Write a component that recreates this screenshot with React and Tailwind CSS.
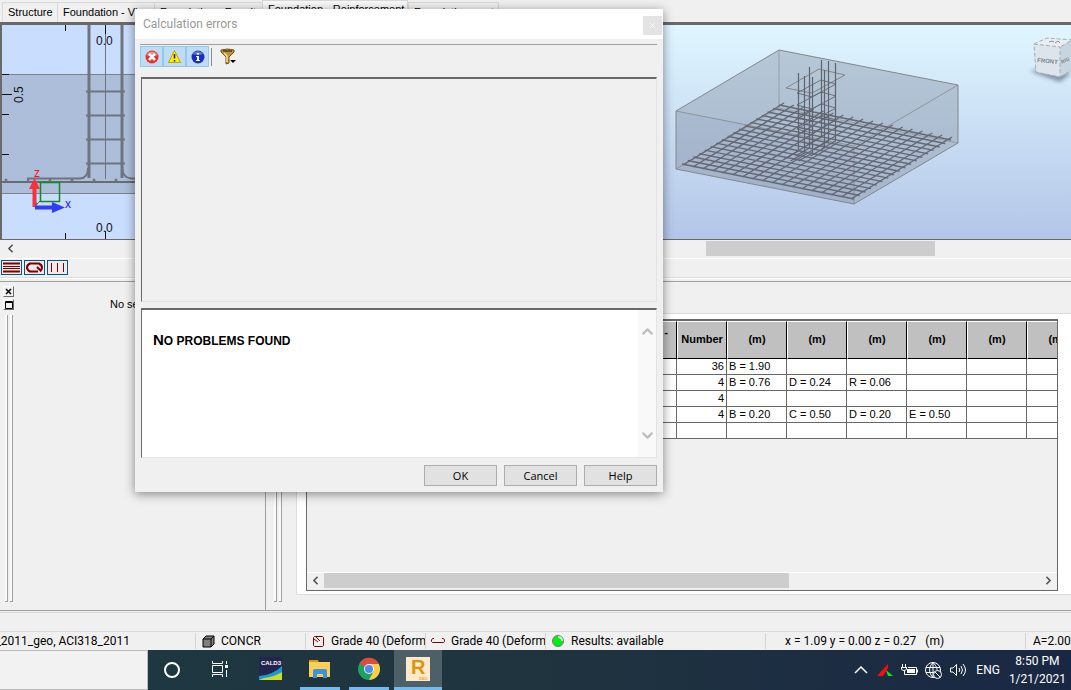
import React from 'react';
import { ChevronDown, ChevronLeft, ChevronRight, ChevronUp } from 'lucide-react';

const TABS = [
  { label: 'Structure', width: 'w-[55px]' },
  { label: 'Foundation - Views', width: 'w-[97px]' },
  { label: 'Foundation - Results', width: 'w-[108px]' },
  { label: 'Foundation - Reinforcement', width: 'w-[146px]', active: true },
  { label: 'Foundation - notes', width: 'w-[91px]' },
];

const ROWS = [
  ['36', 'B = 1.90', '', '', '', '', ''],
  ['4', 'B = 0.76', 'D = 0.24', 'R = 0.06', '', '', ''],
  ['4', '', '', '', '', '', ''],
  ['4', 'B = 0.20', 'C = 0.50', 'D = 0.20', 'E = 0.50', '', ''],
  ['', '', '', '', '', '', ''],
];

// Reinforcement mesh corners
const BACK = [121, 82];
const RIGHT = [289, 116];
const LEFT = [24, 141];
const BARS = Array.from({ length: 18 }, (_, i) => i / 17);

const STARTER_BARS = [
  [138, 50, 128],
  [144, 53, 130],
  [149, 44, 125],
  [152, 54, 130],
  [161, 37, 114],
  [164, 47, 125],
  [168, 38, 118],
  [175, 40, 118],
];

function TabStrip() {
  return (
    <nav className="flex h-[22px] items-end pl-[2px]">
      {TABS.map((tab) => (
        <button
          key={tab.label}
          className={`shrink-0 overflow-hidden border-t border-l border-[#d9d9d9] pl-[5px] text-left text-[11px] whitespace-nowrap ${tab.width} ${
            tab.active ? 'h-[22px] border-r bg-[#f9f9f9] pb-[4px]' : 'h-[20px] last:border-r'
          }`}
        >
          {tab.label}
        </button>
      ))}
    </nav>
  );
}

function ElevationView() {
  return (
    <div className="w-[400px] shrink-0 overflow-hidden border-r border-[#696969] bg-[#c9ddff]">
      <svg width="400" height="215" viewBox="2 25 400 215" fontFamily="Liberation Sans, sans-serif">
        <rect x="2" y="74" width="400" height="120" fill="#adbedb" />
        <path d="M2 74.5H402M2 193.5H402" stroke="#7c828c" />
        <path d="M2 182H402" stroke="#686c74" strokeWidth="2" />
        <g stroke="#6f747e" fill="none">
          <path d="M105.5 25V179" strokeWidth="1" />
          <path d="M89 25V178M122 25V178" strokeWidth="3" />
          <path d="M86 91.500H125M86 115.500H125M86 139.500H125M86 163.500H125" strokeWidth="2" />
          <path d="M28 181V178.500H80Q88 178 88 168M122 168Q123 178 131 178.500H180" strokeWidth="2" />
        </g>
        <g fill="#6f747e">
          {[6, 50, 72, 94, 116].map((x) => (
            <circle key={x} cx={x} cy="180" r="1.500" />
          ))}
        </g>
        <path
          d="M65.500 25V31M65.500 233V240M105.500 25V34M105.500 231V240M2 74.500H9M2 94.500H12M2 114.500H9M2 154.500H9"
          stroke="#111"
        />
        <g fontSize="12" fill="#111">
          <text x="96" y="45">0.0</text>
          <text x="96" y="232">0.0</text>
          <text x="0" y="0" transform="translate(23 103) rotate(-90)">0.5</text>
        </g>
        <rect x="40.500" y="182.500" width="19" height="19" fill="none" stroke="#118a22" strokeWidth="1.500" />
        <path d="M34 200L37 204L41 200M37 204L35 208" stroke="#118a22" fill="none" />
        <path d="M32.500 207V189H29L34.500 178L40 189H36.500V207Z" fill="#f8323c" />
        <path d="M35 205.500H52V202L65 207.500L52 213V209.500H35Z" fill="#2f3cff" />
        <text x="34" y="177" fontSize="12" fill="#f01020">z</text>
        <text x="65" y="208" fontSize="12" fill="#2020f0">x</text>
      </svg>
    </div>
  );
}

function FootingModel() {
  const dx = [RIGHT[0] - BACK[0], RIGHT[1] - BACK[1]];
  const dy = [LEFT[0] - BACK[0], LEFT[1] - BACK[1]];

  return (
    <svg width="310" height="215" viewBox="0 2 310 215" className="shrink-0" fill="none">
      <path d="M16 88L119 27L298 62V120L194 181L16 146Z" fill="#8f9bad" fillOpacity=".48" />
      <path d="M16 88L194 123V181L16 146Z" fill="#8b98b8" fillOpacity=".14" />
      <g stroke="#858687">
        <path d="M16 88L119 27L298 62V120L194 181L16 146Z" />
        <path d="M119 27V85L16 146M119 85L298 120" strokeOpacity=".6" />
        <path d="M16 88L194 123L298 62M194 123V181" strokeOpacity=".75" />
      </g>
      <g stroke="#646873" strokeWidth="1.400">
        {BARS.map((t) => (
          <path
            key={`a${t}`}
            d={`M${BACK[0] + dx[0] * t + 3} ${BACK[1] + dx[1] * t - 2}l${dy[0] - 4} ${dy[1] + 3}`}
          />
        ))}
        {BARS.map((t) => (
          <path
            key={`b${t}`}
            d={`M${BACK[0] + dy[0] * t - 2} ${BACK[1] + dy[1] * t}l${dx[0] + 4} ${dx[1] + 1}`}
          />
        ))}
      </g>
      <path d="M126 65L159 46L185 52L152 70Z" stroke="#858687" />
      <g stroke="#5f636d">
        {STARTER_BARS.map(([x, top, bottom]) => (
          <path key={x} d={`M${x + 0.5} ${top}V${bottom}l-14 8`} strokeWidth="1.200" />
        ))}
        {[0, 12, 24, 36].map((y) => (
          <path key={y} d={`M137 ${70 + y}L161 ${57 + y}L176 ${61 + y}L152 ${74 + y}Z`} strokeOpacity=".85" />
        ))}
      </g>
    </svg>
  );
}

function ViewCube() {
  return (
    <svg width="45" height="60" viewBox="0 0 45 60" className="shrink-0" fontFamily="Liberation Sans, sans-serif">
      <defs>
        <filter id="cubeShadow" x="-30%" y="-30%" width="160%" height="160%">
          <feGaussianBlur stdDeviation="2" />
        </filter>
      </defs>
      <path d="M4 46L22 42L45 48L34 57Z" fill="#7f93a5" filter="url(#cubeShadow)" />
      <path d="M8 19L34 22V52L10 47Z" fill="#dce5ec" />
      <path d="M8 19L21 13L46 15L34 22Z" fill="#e8eef2" />
      <path d="M34 22L46 15V45L34 52Z" fill="#c8d4de" />
      <path
        d="M8 19L34 22V52L10 47ZM8 19L21 13L46 15L34 22M34 52L46 45"
        fill="none"
        stroke="#a7adb2"
        strokeDasharray="4 2"
      />
      <path d="M23 17l3-1 2 1M29 18l3-2 2 2" fill="none" stroke="#8e959b" />
      <text fontSize="6" fontWeight="bold" fill="#7d858c" transform="translate(11 37) rotate(6)">
        FRONT
      </text>
      <text fontSize="5" fontWeight="bold" fill="#7d858c" transform="translate(36 39) rotate(-28)">
        RIG
      </text>
    </svg>
  );
}

function DisplayToolbar() {
  const box = 'flex h-[15px] w-[21px] items-center justify-center border border-[#005499] bg-[#f4e9e9]';
  return (
    <div className="flex h-[20px] items-start gap-[2px] border-t border-b border-t-white border-b-[#dcdcdc] pt-px pl-px">
      <button className={box} aria-label="Straight bars">
        <svg width="17" height="11" stroke="#7c0000">
          <path d="M0 1.500H17M0 9.500H17" strokeWidth="2" />
          <path d="M0 4.500H17M0 6.500H17" />
        </svg>
      </button>
      <button className={box} aria-label="Stirrups">
        <svg width="17" height="11" fill="none" stroke="#7c0000" strokeWidth="2">
          <path d="M14 8L11 5M12 9.500H4Q1 8 1 5.500Q1 3 4 1.500H13Q16 3 16 5.500Q16 8 14 9.500" />
        </svg>
      </button>
      <button className={box} aria-label="Longitudinal bars">
        <svg width="17" height="11" stroke="#7c0000">
          <path d="M2.500 1V10M8.500 1V10M14.500 1V10" />
        </svg>
      </button>
    </div>
  );
}

function BarTable() {
  const th =
    'border border-t-white border-l-white border-r-black border-b-black bg-[#c0c0c0] p-0 pb-[2px] text-[11px] font-bold';
  return (
    <table className="w-[780px] table-fixed border-separate border-spacing-0">
      <colgroup>
        <col className="w-[370px]" />
        <col className="w-[50px]" />
        <col span={6} className="w-[60px]" />
      </colgroup>
      <thead>
        <tr className="h-[38px]">
          <th className={`${th} pr-[8px]`}>
            <div className="h-[30px] text-right">-</div>
          </th>
          <th className={th}>Number</th>
          {[0, 1, 2, 3, 4, 5].map((i) => (
            <th key={i} className={th}>(m)</th>
          ))}
        </tr>
      </thead>
      <tbody>
        {ROWS.map((row, i) => (
          <tr key={i} className="h-[16px]">
            <td className="border-r border-b border-[#696969] bg-white p-0" />
            {row.map((value, j) => (
              <td
                key={j}
                className={`h-[16px] border-r border-b border-[#696969] bg-white px-[2px] py-0 text-[11px] leading-[15px] ${
                  j === 0 ? 'text-right' : ''
                }`}
              >
                {value}
              </td>
            ))}
          </tr>
        ))}
      </tbody>
    </table>
  );
}

function DockGrip() {
  return (
    <div className="flex gap-[2px]">
      <div className="w-[3px] border-r border-b border-[#a0a0a0] bg-[#fafafa]" />
      <div className="w-[3px] border-r border-b border-[#a0a0a0] bg-[#fafafa]" />
    </div>
  );
}

function LowerPane() {
  const dockButton =
    'flex h-[11px] w-[11px] items-center justify-center border border-white border-r-[#696969] border-b-[#696969]';
  return (
    <div className="flex min-h-[330px] flex-1 border-t border-b border-[#a0a0a0]">
      <aside className="flex w-[266px] shrink-0 border-r border-[#a0a0a0] pl-[3px]">
        <div className="flex w-[107px] flex-col gap-[2px] pt-[4px] pb-[8px]">
          <button className={dockButton} aria-label="Close pane">
            <svg width="7" height="7" stroke="#000" strokeWidth="1.500">
              <path d="M1 1L6 6M6 1L1 6" />
            </svg>
          </button>
          <button className={dockButton} aria-label="Maximize pane">
            <svg width="8" height="8" fill="none" stroke="#000">
              <path d="M.5 .5H7.500V7.500H.5ZM0 1.500H8" />
            </svg>
          </button>
          <div className="flex flex-1 pt-[3px] pl-[2px]">
            <DockGrip />
          </div>
        </div>
        <p className="pt-[14px] text-[11px]">No selection</p>
      </aside>
      <div className="flex pt-[33px] pb-[8px] pl-[8px]">
        <DockGrip />
      </div>
      <div className="flex min-w-0 flex-1 pt-[31px] pb-[15px] pl-[14px]">
        <div className="flex min-w-0 flex-1 border border-r-0 border-[#dcdcdc] bg-white pt-[5px] pr-[13px] pb-[3px] pl-[9px]">
          <div className="flex min-w-0 flex-1 flex-col overflow-hidden border border-t-2 border-[#696969] bg-[#f0f0f0]">
            <div className="flex-1">
              <BarTable />
            </div>
            <div className="flex h-[18px] items-start border-t border-white">
              <ChevronLeft className="mt-px ml-[2px] size-[13px] text-[#505050]" strokeWidth={3} />
              <div className="flex flex-1 px-[2px]">
                <div className="h-[15px] w-[65%] bg-[#cdcdcd]" />
              </div>
              <ChevronRight className="mt-px mr-[2px] size-[13px] text-[#505050]" strokeWidth={3} />
            </div>
          </div>
        </div>
      </div>
    </div>
  );
}

function StatusBar() {
  const cell = 'flex h-[16px] shrink-0 items-center overflow-hidden border-r border-[#d5d5d5]';
  return (
    <footer className="mt-[1px] flex h-[38px] items-end overflow-hidden border-t border-[#d9d9d9] font-[Roboto,sans-serif] text-[12px] whitespace-pre">
      <div className="flex h-[19px] w-full items-center border-t border-[#d9d9d9]">
        <div className={`${cell} w-[196px]`}>
          <span className="flex w-[130px] justify-end">8_2011_geo, ACI318_2011</span>
        </div>
        <div className={`${cell} w-[110px] gap-[6px] pl-[6px]`}>
          <svg width="13" height="13" stroke="#000" fill="#808080">
            <path d="M1 4L4 1H12V9L9 12H1ZM1 4H9V12M9 4L12 1" />
          </svg>
          CONCR
        </div>
        <div className={`${cell} w-[120px] gap-[7px] pl-[7px]`}>
          <svg width="11" height="11" className="shrink-0" fill="none" stroke="#7c0000">
            <path d="M1.500 .5H9.500L10.500 1.500V9.500L9.500 10.500H1.500L.5 9.500V1.500ZM3 1L7 5M1 3L5 6" />
          </svg>
          Grade 40 (Deform
        </div>
        <div className={`${cell} w-[120px] gap-[6px] pl-[5px]`}>
          <svg width="14" height="6" className="shrink-0" fill="none" stroke="#7c0000">
            <path d="M3 .5H1.500L.5 2V3.500L1.500 4.500H12.500L13.500 3.500V2L12.500 .5H11" />
          </svg>
          Grade 40 (Deform
        </div>
        <div className={`${cell} w-[220px] gap-[7px] pl-[6px]`}>
          <svg width="12" height="12">
            <circle cx="6" cy="6" r="5.500" fill="#00ef10" stroke="#777" />
            <path d="M6 2Q10 2 10 6" stroke="#b9ffc0" strokeWidth="2" fill="none" />
          </svg>
          Results: available
        </div>
        <div className={`${cell} w-[260px] pl-[19px]`}>x = 1.09 y = 0.00 z = 0.27   (m)</div>
        <div className="pl-[7px]">A=2.00</div>
      </div>
    </footer>
  );
}

function Taskbar() {
  const app = 'flex h-[40px] items-center justify-center border-b-[3px]';
  return (
    <div className="flex h-[40px] shrink-0 bg-linear-to-r from-[#1e3841] via-[#1f343f] to-[#1a2744] font-[Roboto,sans-serif] text-[12px] text-white">
      <input
        type="text"
        aria-label="Search"
        className="w-[148px] border border-l-0 border-[#bcbcbc] bg-[#f2f2f2] outline-none"
      />
      <button className={`${app} w-[48px] border-transparent`} aria-label="Cortana">
        <svg width="18" height="18" fill="none" stroke="#fff" strokeWidth="2">
          <circle cx="9" cy="10" r="7" />
        </svg>
      </button>
      <button className={`${app} w-[48px] border-transparent`} aria-label="Task view">
        <svg width="18" height="17" fill="none" stroke="#fff">
          <path d="M1.500 1V3.500H11.500V1M1.500 5.500H11.500V12.500H1.500ZM1.500 17V14.500H11.500V17M15.500 1V4M15.500 10V17" />
          <path d="M14 5H17V8H14Z" fill="#fff" stroke="none" />
        </svg>
      </button>
      <button className={`${app} w-[52px] border-transparent`} aria-label="CALD3">
        <svg width="23" height="23" viewBox="0 0 23 23" fontFamily="Liberation Sans, sans-serif">
          <rect width="23" height="23" fill="#24254f" />
          <path d="M0 19Q14 18 23 9V23H0Z" fill="#1799d6" />
          <path d="M5 21Q15 20 23 15V23H0Z" fill="#cadc2c" />
          <text x="2" y="8" fontSize="6" fontWeight="bold" fill="#fff">CALD3</text>
        </svg>
      </button>
      <button className={`${app} ml-[4px] w-[40px] border-[#76b9ed]`} aria-label="File Explorer">
        <svg width="22" height="20" viewBox="0 0 22 20">
          <path d="M0 1H9L10 4H0Z" fill="#d99b0c" />
          <path d="M0 3H21V18H0Z" fill="#fbce57" />
          <path d="M4 19V12Q4 10 6 10H16Q18 10 18 12V19H14V15H8V19Z" fill="#3c94dc" />
        </svg>
      </button>
      <button className={`${app} ml-[9px] w-[40px] border-[#76b9ed]`} aria-label="Chrome">
        <svg width="24" height="24" viewBox="0 0 24 24">
          <circle cx="12" cy="12" r="11" fill="#1da15f" />
          <path d="M12 12L2.500 6.500A11 11 0 0 1 22 7H12Z" fill="#db4c3f" />
          <path d="M12 7H21.800A11 11 0 0 1 12 23L16.500 14.500Z" fill="#ffce44" />
          <circle cx="12" cy="12" r="5" fill="#f1f1f1" />
          <circle cx="12" cy="12" r="4" fill="#4a8af4" />
        </svg>
      </button>
      <button className={`${app} ml-[5px] w-[48px] border-[#76b9ed] bg-[#4d5f67]`} aria-label="Robot">
        <svg width="24" height="24" viewBox="0 0 24 24" fontFamily="Liberation Sans, sans-serif">
          <rect width="24" height="24" fill="#fde9cc" />
          <text x="5" y="17" fontSize="20" fontWeight="bold" fill="#d9960f">R</text>
          <text x="13" y="23" fontSize="4" fontWeight="bold" fill="#eba43a">DEU</text>
        </svg>
      </button>

      <div className="ml-auto flex items-center pr-[5px]">
        <svg width="14" height="8" fill="none" stroke="#fff" strokeWidth="1.500">
          <path d="M1 7L7 1L13 7" />
        </svg>
        <svg width="16" height="12" className="ml-[9px]">
          <path d="M0 12L11 0V4L6 12Z" fill="#ff0a0a" />
          <path d="M9 6L16 12H11Z" fill="#0ce81c" />
        </svg>
        <svg width="17" height="12" className="ml-[8px]" fill="none" stroke="#fff">
          <path d="M1.500 0V3M4.500 0V3M0 3.500H6M.5 3.500V5Q1 6.500 3 6.500T5.500 5V3.500M3.500 6.500V10.500H15.500V3.500H7" />
          <path d="M6 5H14V9H6ZM16 5.500H17V8.500H16Z" fill="#fff" stroke="none" />
        </svg>
        <svg width="17" height="17" className="ml-[7px]" fill="none" stroke="#fff">
          <circle cx="8" cy="8" r="7.500" />
          <path d="M8 .5C3.500 5 3.500 11 8 15.500M8 .5C12.500 5 12 8 12 8M8 .5V15.500M1 5.500H15M1 10.500H10" />
          <circle cx="12.500" cy="12.500" r="4" fill="#1a2744" />
          <path d="M10 10L15 15" />
        </svg>
        <svg width="17" height="14" className="ml-[8px]" fill="none" stroke="#fff">
          <path d="M.5 5V9H3L6.500 12.500V1.500L3 5ZM9 5Q10.500 7 9 9M11 3Q14 7 11 11M13 1Q18 7 13 13" />
        </svg>
        <span className="ml-[9px]">ENG</span>
        <div className="ml-[9px] text-center leading-[18px]">
          <div>8:50 PM</div>
          <div>1/21/2021</div>
        </div>
      </div>
    </div>
  );
}

function CalculationErrorsDialog() {
  const toggle = 'flex h-[21px] w-[23px] items-center justify-center border border-[#90c8f6] bg-[#c0dcf3]';
  const sunken = 'ml-px border border-t-2 border-[#696969] border-r-[#e3e3e3] border-b-[#e3e3e3]';
  const button =
    "h-[21px] w-[73px] border border-[#adadad] bg-[#e1e1e1] font-['Open_Sans',sans-serif] text-[11px] leading-[19px]";

  return (
    <div
      role="dialog"
      aria-label="Calculation errors"
      className="absolute top-[9px] left-[135px] w-[528px] bg-[#f0f0f0] shadow-[0_2px_10px_rgba(0,0,0,0.45)]"
    >
      <header className="flex h-[30px] items-start justify-between bg-white pr-px pl-[8px]">
        <h1 className="font-[Roboto,sans-serif] text-[12px] leading-[30px] text-[#999]">Calculation errors</h1>
        <button
          className="mt-[7px] flex h-[19px] w-[19px] items-center justify-center bg-[#e3e3e3] text-white"
          aria-label="Close"
        >
          <svg width="5" height="5" stroke="#f8f8f8">
            <path d="M0 0L5 5M5 0L0 5" />
          </svg>
        </button>
      </header>

      <div className="pt-[5px] pr-[6px] pb-[6px] pl-[5px]">
        <div className="flex h-[33px] items-start border-t border-[#a0a0a0] pt-px">
          <button className={toggle} aria-label="Errors" aria-pressed="true">
            <svg width="14" height="14">
              <circle cx="7" cy="7" r="6.500" fill="#ea2f2c" />
              <path d="M1.500 5A6 6 0 0 1 12.500 5Q7 7 1.500 5Z" fill="#e58f90" />
              <path d="M4 4L10 10M10 4L4 10" stroke="#fff" strokeWidth="2.500" />
            </svg>
          </button>
          <button className={toggle} aria-label="Warnings" aria-pressed="true">
            <svg width="13" height="13">
              <path d="M6.500 .5L12.500 12.500H.5Z" fill="#ffee00" stroke="#b9a70c" />
              <path d="M6.500 4V8.500M6.500 10V11.500" stroke="#222" strokeWidth="1.500" />
            </svg>
          </button>
          <button className={toggle} aria-label="Information" aria-pressed="true">
            <svg width="14" height="14">
              <circle cx="7" cy="7" r="6.500" fill="#1d2bc4" />
              <path d="M2 4A6 6 0 0 1 12 4Q7 6 2 4Z" fill="#5f78cb" />
              <path d="M6 3H8V4.500H6ZM5 6H8V10H9V11H5V10H6V7H5Z" fill="#fff" />
            </svg>
          </button>
          <div className="mt-[2px] ml-[2px] h-[18px] w-px bg-[#8c8c8c]" />
          <button className="ml-[8px] flex h-[21px] items-center" aria-label="Filter">
            <svg width="17" height="17" viewBox="0 0 17 17">
              <path d="M1 2Q7.500 0 14 2V4L9 9V15L6 16V9L1 4Z" fill="#bd9039" stroke="#7a5418" />
              <path d="M3 3H12" stroke="#533915" strokeWidth="1.500" />
              <path d="M4 5L7 8V14" stroke="#f5dda1" strokeWidth="1.500" fill="none" />
              <path d="M10 12H16L13 15Z" fill="#000" />
            </svg>
          </button>
        </div>

        <div className={`h-[225px] ${sunken}`} />

        <div className={`mt-[6px] flex h-[150px] justify-between bg-white ${sunken}`}>
          <p className="pt-[21px] pl-[11px] text-[12px] leading-[18px] font-bold uppercase first-letter:text-[15px]">
            No problems found
          </p>
          <div className="flex w-[18px] flex-col items-center justify-between bg-[#f9f9f9] py-[13px]">
            <ChevronUp className="size-[17px] text-[#bdbdbd]" strokeWidth={3} />
            <ChevronDown className="size-[17px] text-[#bdbdbd]" strokeWidth={3} />
          </div>
        </div>

        <div className="flex justify-end gap-[7px] pt-[7px]">
          <button className={button}>OK</button>
          <button className={button}>Cancel</button>
          <button className={button}>Help</button>
        </div>
      </div>
    </div>
  );
}

export default function App() {
  return (
    <div className="relative flex min-h-screen flex-col overflow-hidden bg-[#f0f0f0] font-['Liberation_Sans',sans-serif] text-black">
      <TabStrip />
      <main className="flex flex-1 flex-col">
        <div className="flex h-[218px] border-t-[3px] border-b border-l-2 border-[#696969]">
          <ElevationView />
          <div className="flex min-w-0 flex-1 items-start justify-between overflow-hidden bg-linear-to-b from-[#e0f6ff] to-[#b3c6e8] pl-[258px]">
            <FootingModel />
            <ViewCube />
          </div>
        </div>
        <div className="flex h-[18px] items-start pt-px">
          <div className="w-[402px] shrink-0 pt-px pl-[4px]">
            <ChevronLeft className="size-[13px] text-[#505050]" strokeWidth={3} />
          </div>
          <div className="flex flex-1 pl-[304px]">
            <div className="h-[15px] w-[229px] bg-[#cdcdcd]" />
          </div>
        </div>
        <DisplayToolbar />
        <div className="h-[3px] border-t border-white" />
        <LowerPane />
      </main>
      <StatusBar />
      <Taskbar />
      <CalculationErrorsDialog />
    </div>
  );
}
